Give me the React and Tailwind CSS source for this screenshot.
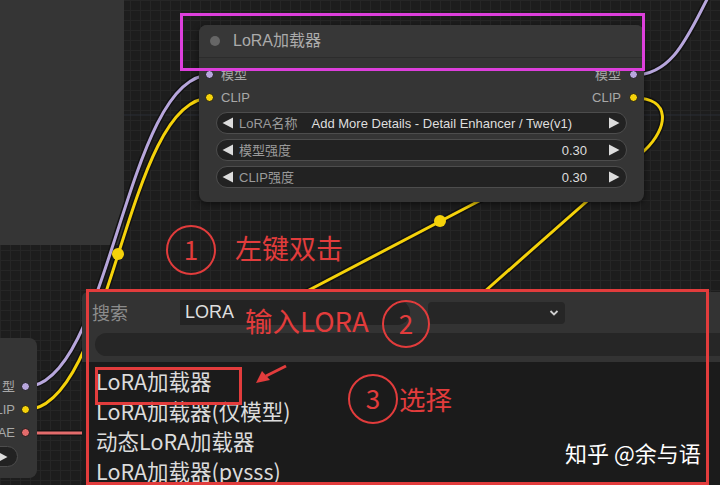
import React from "react";

const Tri = ({ dir = "left", color = "#dcdcdc" }) => (
  <svg width="12" height="12" viewBox="0 0 12 12" className="shrink-0">
    {dir === "left" ? (
      <polygon points="11,0.5 11,11.5 0.5,6" fill={color} />
    ) : (
      <polygon points="1,0.5 1,11.5 11.5,6" fill={color} />
    )}
  </svg>
);

function Widget({ label, value, align = "right", valueGap = "ml-[14px]" }) {
  return (
    <div className="h-[22px] rounded-full bg-[#222222] border border-[#4d4d4d] flex items-center pl-[5px] pr-[6px] text-[13px] leading-none">
      <Tri dir="left" />
      <span className="ml-[5px] text-[#9a9a9a] whitespace-nowrap">{label}</span>
      <span
        className={`${valueGap} flex-1 whitespace-nowrap text-[#dedede] ${
          align === "right" ? "text-right" : "text-left"
        }`}
      >
        {value}
      </span>
      <span className="ml-[21px]">
        <Tri dir="right" />
      </span>
    </div>
  );
}

function Dot({ color }) {
  return (
    <span
      className="block w-[9px] h-[9px] rounded-full border border-[#1a1a1a]"
      style={{ backgroundColor: color }}
    />
  );
}

export default function App() {
  const nodeFont = "font-['Liberation_Sans','Noto_Sans_CJK_SC',sans-serif]";
  const annoFont = "font-['Noto_Sans_CJK_SC','Noto_Sans',sans-serif]";
  return (
    <div className="relative w-[720px] h-[485px] overflow-hidden bg-[#1d1d1d] bg-[linear-gradient(to_right,#262626_1px,transparent_1px),linear-gradient(to_bottom,#262626_1px,transparent_1px)] bg-[size:10px_10px]">
      {/* top-left grey node */}
      <div className="absolute left-[-10px] top-[-10px] w-[134px] h-[255px] rounded-br-md bg-[#353535]" />

      {/* wires */}
      <svg
        className="absolute left-0 top-0 pointer-events-none"
        width="720"
        height="485"
        viewBox="0 0 720 485"
      >
        <line x1="124" y1="115" x2="720" y2="115" stroke="#2a2e36" strokeWidth="1" />
        <g fill="none" stroke="#121212" strokeWidth="6" strokeLinecap="round">
          <path d="M 25 387 C 110 387, 125 75, 210 75" />
          <path d="M 25 410 C 112 410, 125 98, 210 98" />
          <path d="M 25 433 L 90 433" />
          <path d="M 634 75 C 675 75, 690 30, 712 -10" />
          <path d="M 634 98 C 672 98, 668 128, 645 150 L 475 300" />
          <path d="M 290 300 L 500 190" />
        </g>
        <g fill="none" strokeWidth="3" strokeLinecap="round">
          <path d="M 25 387 C 110 387, 125 75, 210 75" stroke="#b7a6dc" />
          <path d="M 25 410 C 112 410, 125 98, 210 98" stroke="#f5d20a" />
          <path d="M 25 433 L 90 433" stroke="#e36b6b" />
          <path d="M 634 75 C 675 75, 690 30, 712 -10" stroke="#b7a6dc" />
          <path d="M 634 98 C 672 98, 668 128, 645 150 L 475 300" stroke="#f5d20a" />
          <path d="M 290 300 L 500 190" stroke="#f5d20a" />
        </g>
        <circle cx="118" cy="254" r="6" fill="#f5d20a" />
        <circle cx="440" cy="221" r="6" fill="#f5d20a" />
      </svg>

      {/* LoRA node */}
      <div
        className={`absolute left-[199px] top-[25px] w-[445px] h-[177px] rounded-lg bg-[#353535] shadow-[0_2px_6px_rgba(0,0,0,0.5)] flex flex-col ${nodeFont}`}
      >
        <div className="h-[33px] flex items-center pl-[11px] border-b border-[#2c2c2c] bg-[#373737] rounded-t-lg">
          <span className="block w-[10px] h-[10px] rounded-full bg-[#666666]" />
          <span className="ml-[13px] text-[16px] text-[#ababab]">LoRA加载器</span>
        </div>
        <div className="pt-[5px] flex flex-col">
          <div className="h-[23px] flex items-center justify-between pl-[6px] pr-[6px] text-[13px] text-[#a8a8a8]">
            <div className="flex items-center gap-[7px]">
              <Dot color="#b7a6dc" />
              <span>模型</span>
            </div>
            <div className="flex items-center gap-[8px]">
              <span>模型</span>
              <Dot color="#b7a6dc" />
            </div>
          </div>
          <div className="h-[23px] flex items-center justify-between pl-[6px] pr-[6px] text-[13px] text-[#a8a8a8]">
            <div className="flex items-center gap-[7px]">
              <Dot color="#f5d20a" />
              <span>CLIP</span>
            </div>
            <div className="flex items-center gap-[8px]">
              <span>CLIP</span>
              <Dot color="#f5d20a" />
            </div>
          </div>
        </div>
        <div className="mt-[3px] px-[17px] flex flex-col gap-[5px]">
          <Widget
            label="LoRA名称"
            value="Add More Details - Detail Enhancer / Twe(v1)"
            align="left"
          />
          <Widget label="模型强度" value="0.30" />
          <Widget label="CLIP强度" value="0.30" />
        </div>
      </div>

      {/* magenta highlight */}
      <div className="absolute left-[180px] top-[13px] w-[465px] h-[58px] border-[3px] border-[#dd3fdc]" />

      {/* lower-left node */}
      <div
        className={`absolute left-[-12px] top-[338px] w-[49px] h-[140px] rounded-lg bg-[#353535] flex flex-col items-end pt-[37px] pr-[7px] text-[13px] text-[#a8a8a8] ${nodeFont}`}
      >
        <div className="h-[23px] flex items-center gap-[6px]">
          <span>型</span>
          <Dot color="#b7a6dc" />
        </div>
        <div className="h-[23px] flex items-center gap-[6px]">
          <span>LIP</span>
          <Dot color="#f5d20a" />
        </div>
        <div className="h-[23px] flex items-center gap-[6px]">
          <span>AE</span>
          <Dot color="#e36b6b" />
        </div>
        <div className="mt-[2px] self-start ml-[-6px] h-[21px] w-[36px] rounded-full bg-[#222222] border border-[#4d4d4d] flex items-center justify-end pr-[9px]">
          <Tri dir="right" />
        </div>
      </div>

      {/* search dialog */}
      <div
        className={`absolute left-[82px] top-[292px] w-[660px] h-[200px] rounded-md bg-[#333333] flex flex-col ${annoFont}`}
      >
        <div className="h-[41px] flex items-center pl-[10px]">
          <span className="w-[88px] text-[18px] text-[#8c8c8c]">搜索</span>
          <div className="w-[230px] h-[25px] rounded-r-full bg-[#232323] flex items-center pl-[5px] text-[18px] text-[#dedede] font-['Liberation_Sans',sans-serif]">
            LORA
          </div>
          <div className="ml-[18px] w-[137px] h-[22px] rounded-sm bg-[#262626] flex items-center justify-end pr-[6px]">
            <svg width="10" height="8" viewBox="0 0 10 8">
              <path d="M1.5 2 L5 5.5 L8.5 2" fill="none" stroke="#cfcfcf" strokeWidth="1.8" />
            </svg>
          </div>
        </div>
        <div className="ml-[13px] h-[23px] rounded-l-full bg-[#262626]" />
        <div className="h-[6px]" />
        <div className="flex-1 bg-[#1b1b1b] pl-[14px] pt-[4px] flex flex-col text-[21.5px] leading-[30px] text-[#dcdcdc]">
          <span>LoRA加载器</span>
          <span>LoRA加载器(仅模型)</span>
          <span>动态LoRA加载器</span>
          <span>LoRA加载器(pysss)</span>
        </div>
      </div>

      {/* red annotations */}
      <div className="absolute left-[86px] top-[289px] w-[623px] h-[196px] border-[3px] border-[#e23c3c]" />
      <div className="absolute left-[95px] top-[367px] w-[147px] h-[38px] border-[3px] border-[#e23c3c]" />

      <svg
        className="absolute left-0 top-0 pointer-events-none"
        width="720"
        height="485"
        viewBox="0 0 720 485"
      >
        <g fill="none" stroke="#e23c3c" strokeWidth="2">
          <circle cx="191" cy="250" r="24" />
          <circle cx="406" cy="324" r="23" />
          <circle cx="373" cy="399" r="24" />
        </g>
        <line x1="286" y1="366" x2="266" y2="376" stroke="#e23c3c" strokeWidth="3" />
        <polygon points="256,383 262,371 270,380" fill="#e23c3c" />
      </svg>

      <div className={`absolute left-[179px] top-[232px] w-[24px] text-center text-[26px] leading-[34px] text-[#e23c3c] ${annoFont}`}>
        1
      </div>
      <div className={`absolute left-[235px] top-[230px] text-[27px] leading-[36px] text-[#e23c3c] ${annoFont}`}>
        左键双击
      </div>
      <div className={`absolute left-[245px] top-[302px] text-[27.5px] leading-[36px] text-[#e23c3c] ${annoFont}`}>
        输入LORA
      </div>
      <div className={`absolute left-[394px] top-[306px] w-[24px] text-center text-[26px] leading-[34px] text-[#e23c3c] ${annoFont}`}>
        2
      </div>
      <div className={`absolute left-[361px] top-[381px] w-[24px] text-center text-[26px] leading-[34px] text-[#e23c3c] ${annoFont}`}>
        3
      </div>
      <div className={`absolute left-[399px] top-[381px] text-[26.5px] leading-[36px] text-[#e23c3c] ${annoFont}`}>
        选择
      </div>

      <div className={`absolute left-[565px] top-[437px] text-[22px] leading-[30px] text-white whitespace-nowrap ${annoFont}`}>
        知乎 @余与语
      </div>
    </div>
  );
}
